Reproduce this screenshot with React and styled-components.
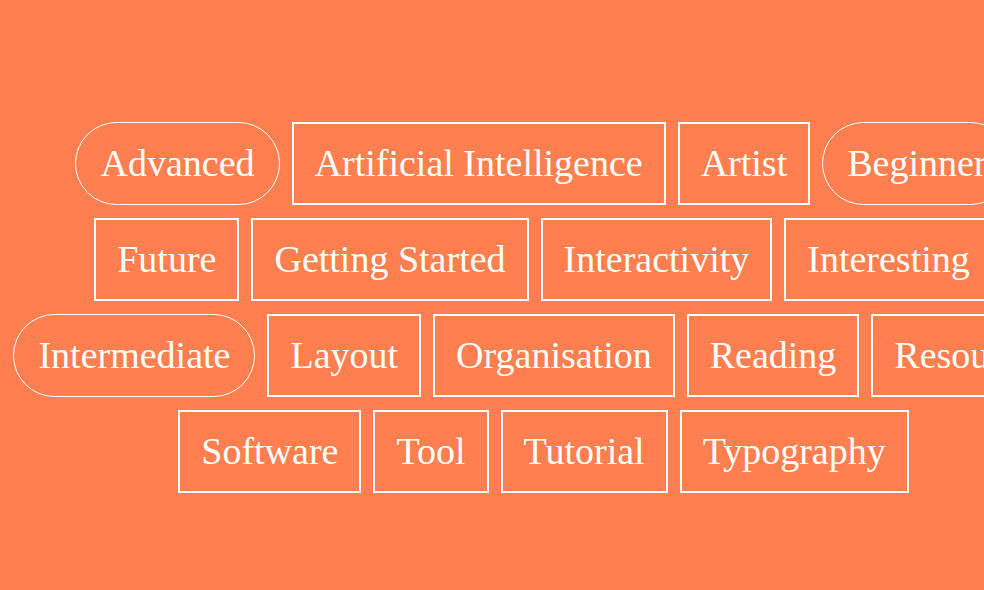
import styled, { createGlobalStyle } from 'styled-components'

const GlobalStyle = createGlobalStyle`
  html, body {
    margin: 0;
    padding: 0;
    background: #ff7f50;
    overflow: hidden;
  }
`

const Page = styled.div`
  width: 984px;
  height: 590px;
  overflow: hidden;
  background: #ff7f50;
`

const Cloud = styled.div`
  width: 1087px;
  padding-top: 122px;
  display: flex;
  flex-direction: column;
  gap: 13px;
`

const Row = styled.div`
  display: flex;
  justify-content: center;
  gap: 12px;
`

const Tag = styled.span`
  flex: none;
  box-sizing: border-box;
  height: 83px;
  display: inline-flex;
  align-items: center;
  padding: ${(props) => (props.$pill ? '0 24px' : '0 21px')};
  border: ${(props) => (props.$pill ? '1.7px' : '2px')} solid #fff;
  border-radius: ${(props) => (props.$pill ? '42px' : '0')};
  font-family: 'Liberation Serif', 'Times New Roman', serif;
  font-size: 38px;
  line-height: 43px;
  color: #fff;
  white-space: nowrap;
`

const rows = [
  [
    { label: 'Advanced', pill: true },
    { label: 'Artificial Intelligence' },
    { label: 'Artist' },
    { label: 'Beginner', pill: true },
  ],
  [
    { label: 'Future' },
    { label: 'Getting Started' },
    { label: 'Interactivity' },
    { label: 'Interesting' },
  ],
  [
    { label: 'Intermediate', pill: true },
    { label: 'Layout' },
    { label: 'Organisation' },
    { label: 'Reading' },
    { label: 'Resources' },
  ],
  [
    { label: 'Software' },
    { label: 'Tool' },
    { label: 'Tutorial' },
    { label: 'Typography' },
  ],
]

const App = () => {
  return (
    <Page>
      <GlobalStyle />
      <Cloud>
        {rows.map((row, i) => (
          <Row key={i}>
            {row.map((tag) => (
              <Tag key={tag.label} $pill={tag.pill}>
                {tag.label}
              </Tag>
            ))}
          </Row>
        ))}
      </Cloud>
    </Page>
  )
}

export default App
